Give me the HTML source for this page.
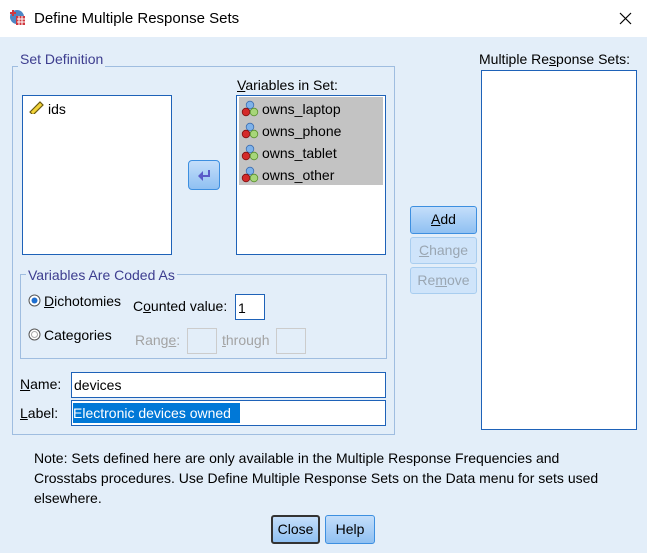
<!DOCTYPE html><html><head><style>
body{margin:0;width:647px;height:553px;background:#e3eef9;font-family:"Liberation Sans",sans-serif;font-size:14px;color:#000;position:relative;overflow:hidden}
.a{position:absolute}
.box{position:absolute;background:#fff;border:1px solid #1e62b8;box-sizing:border-box}
.grp{position:absolute;border:1px solid #9fbde0;box-sizing:border-box}
.leg{position:absolute;background:#e3eef9;color:#3d3d8f;padding:0 2px;line-height:16px}
.btn{position:absolute;box-sizing:border-box;border:1px solid #3d8fe0;border-radius:3px;background:linear-gradient(#c4defa,#8fc0f2);text-align:center;line-height:25px}
.dis{border-color:#a8cdef;background:#cfe4fa;color:#9aa6b2}
.gray{color:#a3a3a3}
.var{position:absolute;left:262px;line-height:22px}
</style></head><body>
<div class="a" style="left:0;top:0;width:647px;height:37px;background:#fff"></div>
<svg class="a" style="left:9px;top:9px" width="17" height="17"><circle cx="8" cy="8" r="7" fill="#4d86c4"/><rect x="7" y="7" width="9" height="9" fill="#d0383f"/><path d="M8 10h8M8 13h8M10 7v9M13 7v9" stroke="#fff" stroke-width="1"/><path d="M4 1v6M1 4h6" stroke="#d0383f" stroke-width="2"/></svg>
<div class="a" style="left:34px;top:10px;font-size:15px">Define Multiple Response Sets</div>
<svg class="a" style="left:619px;top:12px" width="13" height="13"><path d="M1 1L12 12M12 1L1 12" stroke="#000" stroke-width="1.2"/></svg>

<div class="grp" style="left:12px;top:66px;width:383px;height:369px"></div>
<div class="leg" style="left:18px;top:51px">Set Definition</div>
<div class="box" style="left:22px;top:95px;width:150px;height:160px"></div>
<svg class="a" style="left:28px;top:100px" width="16" height="14"><path d="M2 12L12 2L15 5L5 15Z" fill="#f2d33a" stroke="#6b5a10" stroke-width="1.2"/></svg>
<div class="a" style="left:48px;top:101px">ids</div>
<div class="btn" style="left:188px;top:160px;width:32px;height:30px;border-radius:4px"></div>
<svg class="a" style="left:196px;top:168px" width="16" height="14"><path d="M12 2v5H7V3L2 8l5 5V9h7V2z" fill="#5a5ac8"/></svg>
<div class="a" style="left:237px;top:77px"><u>V</u>ariables in Set:</div>
<div class="box" style="left:236px;top:95px;width:150px;height:160px"></div>
<div class="a" style="left:239px;top:97px;width:144px;height:88px;background:#c3c3c3"></div>
<svg class="a" style="left:241px;top:100px" width="18" height="90">
<g id="v"><circle cx="9" cy="5" r="3.8" fill="#7eb2ea" stroke="#3f6fb0" stroke-width=".8"/><circle cx="5" cy="12" r="3.8" fill="#d42a2a" stroke="#801010" stroke-width=".8"/><circle cx="13" cy="12" r="3.8" fill="#a7d67a" stroke="#5a9030" stroke-width=".8"/></g>
<use href="#v" y="22"/><use href="#v" y="44"/><use href="#v" y="66"/></svg>
<div class="var" style="top:98px">owns_laptop</div>
<div class="var" style="top:120px">owns_phone</div>
<div class="var" style="top:142px">owns_tablet</div>
<div class="var" style="top:164px">owns_other</div>

<div class="grp" style="left:20px;top:274px;width:367px;height:85px"></div>
<div class="leg" style="left:26px;top:267px">Variables Are Coded As</div>
<svg class="a" style="left:28px;top:294px" width="13" height="13"><circle cx="6.5" cy="6.5" r="5.5" fill="#fff" stroke="#555"/><circle cx="6.5" cy="6.5" r="3" fill="#1e6fd0"/></svg>
<div class="a" style="left:44px;top:293px"><u>D</u>ichotomies</div>
<div class="a" style="left:133px;top:298px">C<u>o</u>unted value:</div>
<div class="box" style="left:235px;top:294px;width:30px;height:26px;padding:5px 2px">1</div>
<svg class="a" style="left:28px;top:328px" width="13" height="13"><circle cx="6.5" cy="6.5" r="5.5" fill="#fff" stroke="#555"/><circle cx="6.5" cy="6.5" r="3" fill="none" stroke="#aaa"/></svg>
<div class="a" style="left:44px;top:327px">Cate<u>g</u>ories</div>
<div class="a gray" style="left:135px;top:332px">Rang<u>e</u>:</div>
<div class="a" style="left:187px;top:328px;width:30px;height:26px;border:1px solid #ccc;box-sizing:border-box"></div>
<div class="a gray" style="left:222px;top:332px"><u>t</u>hrough</div>
<div class="a" style="left:276px;top:328px;width:30px;height:26px;border:1px solid #ccc;box-sizing:border-box"></div>

<div class="a" style="left:20px;top:376px"><u>N</u>ame:</div>
<div class="box" style="left:71px;top:372px;width:315px;height:26px;padding:4px 2px">devices</div>
<div class="a" style="left:20px;top:405px"><u>L</u>abel:</div>
<div class="box" style="left:71px;top:400px;width:315px;height:26px"></div>
<div class="a" style="left:73px;top:403px;width:167px;height:20px;background:#0078d7;color:#fff;line-height:20px">Electronic devices owned</div>

<div class="btn" style="left:410px;top:206px;width:67px;height:28px"><u>A</u>dd</div>
<div class="btn dis" style="left:410px;top:237px;width:67px;height:27px"><u>C</u>hange</div>
<div class="btn dis" style="left:410px;top:267px;width:67px;height:27px">Re<u>m</u>ove</div>
<div class="a" style="left:479px;top:51px">Multiple Re<u>s</u>ponse Sets:</div>
<div class="box" style="left:481px;top:70px;width:156px;height:360px"></div>

<div class="a" style="left:34px;top:448px;width:580px;line-height:20px">Note: Sets defined here are only available in the Multiple Response Frequencies and Crosstabs procedures. Use Define Multiple Response Sets on the Data menu for sets used elsewhere.</div>
<div class="btn" style="left:271px;top:515px;width:49px;height:29px;border:2px solid #333;line-height:25px">Close</div>
<div class="btn" style="left:325px;top:515px;width:50px;height:29px;line-height:27px">Help</div>
</body></html>
